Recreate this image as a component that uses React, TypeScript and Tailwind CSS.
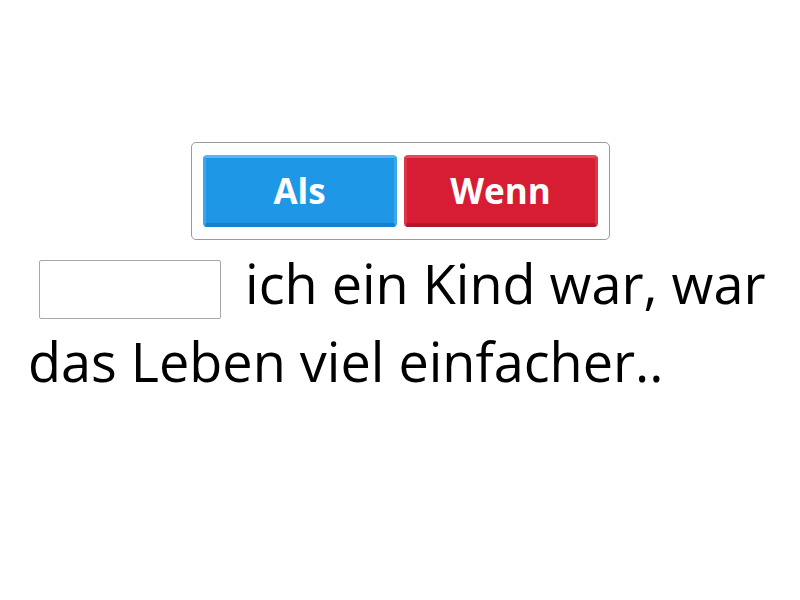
import React from 'react';

const options = [
  {
    label: 'Als',
    className:
      'bg-[#1e98e6] border-t-[#5ab4f0] border-x-[#3aa6ec] border-b-[#1682cf]',
  },
  {
    label: 'Wenn',
    className:
      'bg-[#d61d33] border-t-[#e5495b] border-x-[#dd3448] border-b-[#b2162a]',
  },
];

export default function App() {
  return (
    <div className="w-[800px] h-[600px] bg-white font-['Open_Sans',sans-serif] text-black">
      {/* answer choices */}
      <div className="flex justify-center pt-[142px]">
        <div className="flex gap-[7px] px-[11px] py-[12px] border border-[#9a9a9a] rounded-[5px]">
          {options.map((opt) => (
            <button
              key={opt.label}
              className={`w-[194px] h-[72px] rounded-[4px] border-[3px] border-b-[4px] text-white text-[35px] font-bold leading-none ${opt.className}`}
            >
              {opt.label}
            </button>
          ))}
        </div>
      </div>

      {/* sentence with gap */}
      <div className="px-[28px] pt-[4px] text-[54px] leading-[78px]">
        <span className="inline-block align-[-15px] ml-[11px] mr-[24px] w-[182px] h-[59px] border border-[#a8a8a8] rounded-[2px]"></span>
        ich ein Kind war, war das Leben viel einfacher..
      </div>
    </div>
  );
}
